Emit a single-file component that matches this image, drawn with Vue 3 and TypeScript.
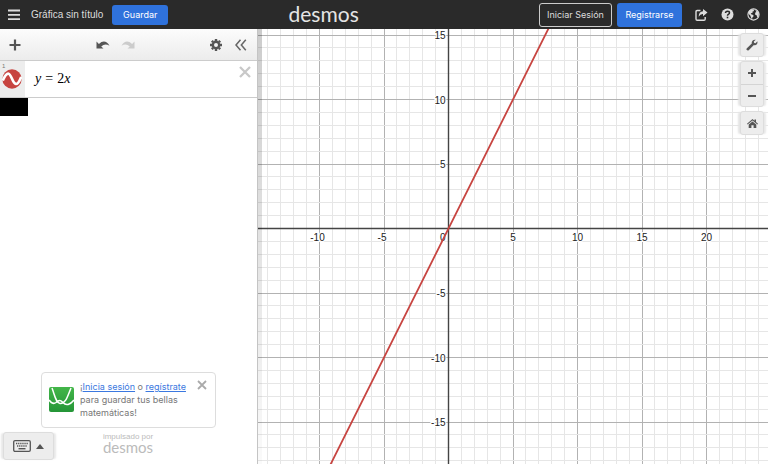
<script setup lang="ts">
import { ref } from 'vue'

const unit = 12.9
const origin = { x: 190.5, y: 199.5 }
const view = { width: 510, height: 435 }

interface Line {
  at: number
  major: boolean
}

function gridLines(start: number, size: number): Line[] {
  const lines: Line[] = []
  const first = Math.ceil(-start / unit)
  const last = Math.floor((size - start) / unit)
  for (let n = first; n <= last; n++) {
    if (n !== 0) lines.push({ at: Math.round(start + n * unit - 0.5) + 0.5, major: n % 5 === 0 })
  }
  return lines
}

const columns = gridLines(origin.x, view.width)
const rows = gridLines(origin.y, view.height)
const xTicks = [-10, -5, 5, 10, 15, 20]
const yTicks = [15, 10, 5, -5, -10, -15]

const slope = 2
const curve = {
  x1: origin.x - (20 * unit) / slope,
  y1: origin.y + 20 * unit,
  x2: origin.x + (20 * unit) / slope,
  y2: origin.y - 20 * unit,
}

const noticeOpen = ref(true)
</script>

<template>
  <div class="app">
    <header class="topbar">
      <div class="side">
        <button class="icon-btn" aria-label="Menú">
          <svg width="12" height="12" viewBox="0 0 12 12"><path d="M0 1.5h12M0 5.8h12M0 10.2h12" stroke="#ddd" stroke-width="1.8" /></svg>
        </button>
        <button class="title">Gráfica sin título</button>
        <button class="btn primary save">Guardar</button>
      </div>
      <div class="logo">desmos</div>
      <div class="side end">
        <button class="btn outline">Iniciar Sesión</button>
        <button class="btn primary register">Registrarse</button>
        <button class="icon-btn share" aria-label="Compartir">
          <svg width="13" height="12" viewBox="0 0 13 12" fill="none">
            <path d="M5.5 1.5H2.2Q1 1.5 1 2.7V10Q1 11.2 2.2 11.2H9Q10.2 11.2 10.2 10V8" stroke="#ddd" stroke-width="1.4" />
            <path d="M8 0L12.5 3.6L8 7.2V5Q5.2 4.8 3.7 7.8Q3.7 2.5 8 2.3Z" fill="#ddd" />
          </svg>
        </button>
        <button class="icon-btn" aria-label="Ayuda">
          <svg width="13" height="13" viewBox="0 0 13 13">
            <circle cx="6.5" cy="6.5" r="6" fill="#ddd" />
            <path d="M4.5 5Q4.6 3.2 6.5 3.2Q8.5 3.2 8.5 4.8Q8.5 5.7 7.4 6.3Q6.5 6.8 6.5 7.7" fill="none" stroke="#2a2a2a" stroke-width="1.5" />
            <rect x="5.7" y="8.7" width="1.6" height="1.6" fill="#2a2a2a" />
          </svg>
        </button>
        <button class="icon-btn" aria-label="Idioma">
          <svg width="13" height="13" viewBox="0 0 13 13">
            <circle cx="6.5" cy="6.5" r="5.6" fill="none" stroke="#ddd" stroke-width="1.1" />
            <path d="M2 3L4.8 1.2L7.2 1.7L6.6 3.2L5.3 3.8L5.6 5L3.8 5.2L4.2 6.2L6.3 7L6.6 8.3L5.4 9.6L5 11.6L4 9.5L3.3 7.5L1.4 5.8ZM8.2 2.2L10.3 2.7L11.8 5.2L11.6 8L10.3 9.6L9.6 7.3L8 6.4L8.3 4.6L9.4 4Z" fill="#ddd" />
          </svg>
        </button>
      </div>
    </header>

    <main class="workspace">
      <aside class="panel">
        <div class="toolbar">
          <button class="icon-btn" aria-label="Agregar elemento">
            <svg width="12" height="12" viewBox="0 0 12 12"><path d="M6 .5v11M.5 6h11" stroke="#555" stroke-width="2.2" /></svg>
          </button>
          <div class="history">
            <button class="icon-btn" aria-label="Deshacer">
              <svg width="14" height="10" viewBox="0 0 14 10"><path d="M.5 1.5V8.5H7.5L5.2 6.4Q9 3 13.5 5.7Q9-1.6 2.9 4Z" fill="#555" /></svg>
            </button>
            <button class="icon-btn" aria-label="Rehacer" disabled>
              <svg width="14" height="10" viewBox="0 0 14 10"><path d="M13.5 1.5V8.5H6.5L8.8 6.4Q5 3 .5 5.7Q5-1.6 11.1 4Z" fill="#ccc" /></svg>
            </button>
          </div>
          <div class="tools">
            <button class="icon-btn" aria-label="Editar lista">
              <svg width="12" height="12" viewBox="0 0 12 12" fill="none" stroke="#555">
                <circle cx="6" cy="6" r="3.2" stroke-width="2.4" />
                <path d="M6 0v2M6 10v2M0 6h2M10 6h2M1.8 1.8l1.4 1.4M8.8 8.8l1.4 1.4M10.2 1.8L8.8 3.2M3.2 8.8l-1.4 1.4" stroke-width="2.4" />
              </svg>
            </button>
            <button class="icon-btn" aria-label="Ocultar lista">
              <svg width="12" height="12" viewBox="0 0 12 12"><path d="M5.5.7L1 6l4.5 5.3M10.8.7L6.3 6l4.5 5.3" fill="none" stroke="#666" stroke-width="1.5" /></svg>
            </button>
          </div>
        </div>

        <ol class="expressions">
          <li class="expression">
            <div class="tab">
              <span class="index">1</span>
              <button class="icon-btn" aria-label="Ocultar expresión">
                <svg width="20" height="20" viewBox="0 0 20 20">
                  <circle cx="10" cy="10" r="9.7" fill="#c74440" />
                  <path d="M.8 11.5Q4 4.2 6.5 4.7Q8 5 10 9.8T14 15Q16.2 15.2 19.2 8" fill="none" stroke="#fff" stroke-width="2.6" />
                </svg>
              </button>
            </div>
            <div class="formula" role="math" aria-label="y = 2x"><i>y</i><span class="equals">=</span>2<i>x</i></div>
            <button class="icon-btn remove" aria-label="Eliminar expresión">
              <svg width="12" height="12" viewBox="0 0 12 12"><path d="M1 1l10 10M11 1L1 11" stroke="#c8c8c8" stroke-width="2.3" /></svg>
            </button>
          </li>
        </ol>
        <div class="next-tab"></div>

        <div class="panel-foot">
          <section v-if="noticeOpen" class="notice">
            <svg class="badge" width="25" height="25" viewBox="0 0 25 25">
              <defs>
                <linearGradient id="leaf" x1="0" y1="0" x2="0" y2="1">
                  <stop offset="0" stop-color="#43b649" /><stop offset="1" stop-color="#249537" />
                </linearGradient>
              </defs>
              <rect width="25" height="25" rx="2" fill="url(#leaf)" />
              <path d="M3 1C6 9 7 16 11 16.5C17 17 19 8 22 1" fill="none" stroke="#fff" stroke-width="1.5" />
              <path d="M0 13C3 17 5 17 7 15.5C10 12.5 12 13 14 15.5C17 19 21 18 25 13" fill="none" stroke="#fff" stroke-width="1.5" />
            </svg>
            <p>¡<a href="#login">Inicia sesión</a> o <a href="#signup">regístrate</a> para guardar tus bellas matemáticas!</p>
            <button class="icon-btn dismiss" aria-label="Cerrar" @click="noticeOpen = false">
              <svg width="10" height="10" viewBox="0 0 10 10"><path d="M1 1l8 8M9 1L1 9" stroke="#aaa" stroke-width="1.8" /></svg>
            </button>
          </section>
          <div class="foot-row">
            <button class="keypad" aria-label="Mostrar teclado">
              <svg width="18" height="12" viewBox="0 0 18 12" fill="none" stroke="#555">
                <rect x=".7" y=".7" width="16.6" height="10.6" rx="1.3" stroke-width="1.3" />
                <path d="M3 3.5h12M4 6h10" stroke-width="1.3" stroke-dasharray="1.3 .8" />
                <path d="M5.5 8.7h7" stroke-width="1.4" />
              </svg>
              <svg width="8" height="5" viewBox="0 0 8 5"><path d="M0 5L4 0l4 5z" fill="#555" /></svg>
            </button>
            <div class="powered"><span>impulsado por</span><strong>desmos</strong></div>
          </div>
        </div>
      </aside>

      <section class="graph" aria-label="Gráfica">
        <svg class="plot" :viewBox="`0 0 ${view.width} ${view.height}`" preserveAspectRatio="xMidYMid slice">
          <g class="grid">
            <line v-for="c in columns" :key="`c${c.at}`" :class="{ major: c.major }" :x1="c.at" :x2="c.at" y1="0" :y2="view.height" />
            <line v-for="r in rows" :key="`r${r.at}`" :class="{ major: r.major }" :y1="r.at" :y2="r.at" x1="0" :x2="view.width" />
          </g>
          <g class="axes">
            <line :x1="origin.x" :x2="origin.x" y1="0" :y2="view.height" />
            <line :y1="origin.y" :y2="origin.y" x1="0" :x2="view.width" />
          </g>
          <g class="labels">
            <text v-for="t in xTicks" :key="`x${t}`" :x="origin.x + t * unit - (t < 0 ? 2 : 0)" :y="origin.y + 12" text-anchor="middle">{{ t }}</text>
            <text v-for="t in yTicks" :key="`y${t}`" :x="origin.x - 3" :y="origin.y - t * unit + 4" text-anchor="end">{{ t }}</text>
            <text :x="origin.x - 3" :y="origin.y + 12" text-anchor="end">0</text>
          </g>
          <line class="curve" v-bind="curve" />
        </svg>
        <div class="controls">
          <button aria-label="Configuración">
            <svg width="12" height="12" viewBox="0 0 12 12"><path d="M1.8 10.2L7.2 4.9" stroke="#555" stroke-width="2.6" stroke-linecap="round" /><path d="M9.8.7L7.8 2.6L8.2 3.9L9.5 4.2L11.4 2.2Q12 5.9 8.6 6.3Q5.8 6.3 5.7 3.6Q6.2.2 9.8.7Z" fill="#555" /></svg>
          </button>
          <div class="zoom">
            <button aria-label="Acercar"><svg width="8" height="8" viewBox="0 0 8 8"><path d="M4 0v8M0 4h8" stroke="#555" stroke-width="2" /></svg></button>
            <button aria-label="Alejar"><svg width="8" height="8" viewBox="0 0 8 8"><path d="M0 4h8" stroke="#555" stroke-width="2" /></svg></button>
          </div>
          <button aria-label="Vista predeterminada">
            <svg width="11" height="9" viewBox="0 0 11 9" fill="#555"><path d="M0 4.7L5.5 0L7.5 1.7V.4H9V3L11 4.7L10.4 5.5L5.5 1.4L.6 5.5Z" /><path d="M1.7 5.6L5.5 2.4L9.3 5.6V9H6.6V6.3H4.4V9H1.7Z" /></svg>
          </button>
        </div>
      </section>
    </main>
  </div>
</template>

<style>
html,
body {
  height: 100%;
  margin: 0;
}
#app {
  height: 100%;
}
</style>

<style scoped>
.app {
  display: flex;
  flex-direction: column;
  height: 100%;
  min-height: 320px;
  overflow: hidden;
  background: #fff;
  font-family: "Liberation Sans", Arial, sans-serif;
  font-size: 10px;
}
button {
  margin: 0;
  padding: 0;
  border: 0;
  background: none;
  font: inherit;
  color: inherit;
  cursor: pointer;
}
svg {
  display: block;
}
.topbar {
  display: flex;
  flex: none;
  align-items: center;
  height: 29px;
  padding: 0 8px;
  background: #2a2a2a;
  color: #ddd;
}
.side {
  display: flex;
  flex: none;
  align-items: center;
}
.title {
  margin-left: 11px;
}
.btn {
  height: 24px;
  border-radius: 3px;
  font-family: Inter, sans-serif;
  font-size: 9px;
  white-space: nowrap;
}
.primary {
  background: #2f72dc;
  color: #fff;
}
.save {
  width: 56px;
  height: 20px;
  margin-left: 9px;
}
.outline {
  width: 73px;
  border: 1px solid #ccc;
}
.register {
  width: 65px;
  margin-left: 5px;
}
.share {
  margin-left: 13px;
}
.end .icon-btn + .icon-btn {
  margin-left: 13px;
}
.logo {
  flex: 1;
  padding: 0 60px 2px 0;
  font-family: Lato, sans-serif;
  font-size: 21px;
  line-height: 24px;
  text-align: center;
  color: #e4e4e4;
}
.workspace {
  display: flex;
  flex: 1;
  min-height: 0;
}
.panel {
  display: flex;
  flex: none;
  flex-direction: column;
  box-sizing: border-box;
  width: 258px;
  border-right: 1px solid #c4c4c4;
}
.toolbar {
  display: flex;
  flex: none;
  align-items: center;
  justify-content: space-between;
  box-sizing: border-box;
  height: 32px;
  padding: 0 10px 0 9px;
  border-bottom: 1px solid #ccc;
  background: linear-gradient(#fcfcfc, #ececec);
}
.history {
  display: flex;
  gap: 11px;
}
.tools {
  display: flex;
  gap: 13px;
}
.expressions {
  margin: 0;
  padding: 0;
  list-style: none;
}
.expression {
  display: flex;
  height: 36px;
  border-bottom: 1px solid #ccc;
}
.tab {
  position: relative;
  display: flex;
  align-items: center;
  box-sizing: border-box;
  width: 25px;
  padding-left: 2px;
  background: #ededed;
}
.index {
  position: absolute;
  top: 1px;
  left: 2px;
  font-size: 6px;
  line-height: 8px;
  color: #777;
}
.formula {
  flex: 1;
  padding-left: 10px;
  font-family: "Liberation Serif", "Times New Roman", serif;
  font-size: 14px;
  line-height: 36px;
  color: #000;
}
.equals {
  padding: 0 4px;
}
.remove {
  align-self: flex-start;
  padding: 5px 6px 0 0;
}
.next-tab {
  width: 28px;
  height: 18px;
  background: #000;
}
.panel-foot {
  margin-top: auto;
}
.notice {
  display: flex;
  align-items: flex-start;
  box-sizing: border-box;
  height: 56px;
  margin: 0 41px;
  padding: 7px 8px 0 7px;
  border: 1px solid #ddd;
  border-radius: 4px;
}
.badge {
  flex: none;
  margin-top: 7px;
}
.notice p {
  flex: 1;
  margin: 0 0 0 6px;
  font-family: Inter, sans-serif;
  font-size: 9px;
  line-height: 13px;
  color: #777;
}
.notice a {
  color: #3b78e0;
}
.foot-row {
  display: flex;
  align-items: flex-start;
  height: 36px;
}
.keypad {
  display: flex;
  align-items: center;
  justify-content: center;
  gap: 5px;
  width: 51px;
  height: 28px;
  margin: 4px 0 0 3px;
  border: 1px solid #ddd;
  border-radius: 3px;
  background: #ededed;
  box-shadow: 3px 0 2px -1px #e8e8e8, -3px 0 2px -1px #e8e8e8;
}
.powered {
  display: flex;
  flex-direction: column;
  align-items: center;
  width: 52px;
  margin: 4px 0 0 48px;
  color: #bbb;
  white-space: nowrap;
}
.powered span {
  font-size: 8px;
  line-height: 9px;
}
.powered strong {
  font-family: Lato, sans-serif;
  font-size: 15px;
  font-weight: 400;
  line-height: 12px;
}
.graph {
  position: relative;
  flex: 1;
  min-width: 0;
  overflow: hidden;
}
.graph::before {
  content: "";
  position: absolute;
  top: 0;
  bottom: 0;
  left: 0;
  width: 4px;
  background: linear-gradient(rgba(0, 0, 0, 0.2), rgba(0, 0, 0, 0.02));
}
.plot {
  width: 100%;
  height: 100%;
}
.grid line {
  stroke: #e6e6e6;
}
.grid .major {
  stroke: #b2b2b2;
}
.axes line {
  stroke: #444;
  stroke-width: 1.4;
}
.labels {
  font-size: 10px;
  fill: #222;
  stroke: #fff;
  stroke-width: 2px;
  paint-order: stroke;
}
.curve {
  stroke: #c74440;
  stroke-width: 1.8;
}
.controls {
  position: absolute;
  top: 4px;
  right: 4px;
  display: flex;
  flex-direction: column;
  gap: 4px;
}
.controls > * {
  box-sizing: border-box;
  width: 24px;
  border: 1px solid #ddd;
  border-radius: 3px;
  background: #ededed;
  box-shadow: -3px 0 2px -1px #e4e4e4, 3px 0 2px -1px #e8e8e8;
}
.controls button {
  display: flex;
  align-items: center;
  justify-content: center;
  height: 24px;
}
.controls .zoom button {
  width: 100%;
  height: 22px;
}
.zoom button + button {
  border-top: 1px solid #d4d4d4;
}
</style>
